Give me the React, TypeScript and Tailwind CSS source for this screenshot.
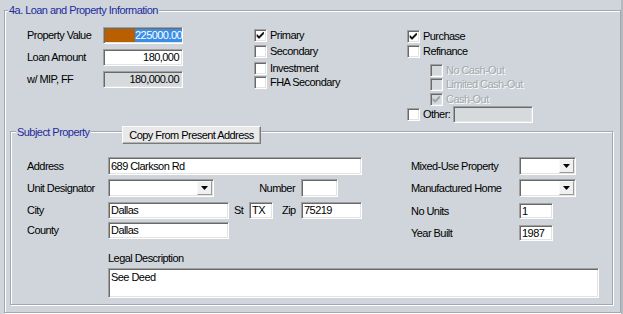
import React from 'react'

// classic 3D sunken edge used by text boxes, combos and check boxes
const sunken =
  'border border-t-[#a0a0a0] border-l-[#a0a0a0] border-b-white border-r-white shadow-[inset_1px_1px_0_#696969,inset_-1px_-1px_0_#e3e3e3]'

const Field: React.FC<{
  w: string
  h?: string
  value?: string
  right?: boolean
  bg?: string
}> = ({ w, h = 'h-[18px]', value = '', right = false, bg = 'bg-white' }) => (
  <div
    className={`${w} ${h} ${bg} ${sunken} flex items-center overflow-hidden whitespace-nowrap ${
      right ? 'justify-end pr-[3px]' : 'pl-[2px]'
    }`}
  >
    {value}
  </div>
)

const Combo: React.FC<{ w: string }> = ({ w }) => (
  <div className={`${w} h-[18px] bg-white ${sunken} flex justify-end p-[1px]`}>
    <div className="w-[15px] h-full bg-[#f0f0f0] border border-t-[#fafafa] border-l-[#fafafa] border-b-[#9a9a9a] border-r-[#9a9a9a] flex items-center justify-center">
      <svg width="7" height="4" viewBox="0 0 7 4">
        <path d="M0 0h7L3.5 4z" fill="#000" />
      </svg>
    </div>
  </div>
)

const Check: React.FC<{
  label: string
  checked?: boolean
  disabled?: boolean
  className?: string
}> = ({ label, checked = false, disabled = false, className = '' }) => (
  <div className={`flex items-center h-[13px] ${className}`}>
    <span
      className={`w-[13px] h-[13px] shrink-0 flex items-center justify-center ${sunken} ${
        disabled ? 'bg-[#d3d8dc]' : 'bg-white'
      }`}
    >
      {checked && (
        <svg width="11" height="11" viewBox="0 0 11 11">
          <path
            d="M2 4.5l2 2 4.5-4.5v2L4 8.5l-2-2z"
            fill={disabled ? '#9a9fa3' : '#000'}
            stroke={disabled ? '#9a9fa3' : '#000'}
            strokeWidth="0.6"
          />
        </svg>
      )}
    </span>
    <span
      className={`ml-[3px] whitespace-nowrap ${
        disabled ? 'text-[#a3a8ac] [text-shadow:1px_1px_0_#fff]' : 'text-black'
      }`}
    >
      {label}
    </span>
  </div>
)

export default function App() {
  return (
    <div className="w-[623px] h-[314px] overflow-hidden bg-[#cfd5da] border-r-2 border-[#b3b9be] text-[11px] leading-[13px] tracking-[-0.55px] text-black [font-family:'Liberation_Sans',Arial,sans-serif]">
      {/* 4a group */}
      <div className="mt-[10px] ml-[4px] w-[617px] h-[303px] border border-[#a2a8ad] shadow-[inset_1px_1px_0_#fff,1px_1px_0_#fff]">
        <div className="-mt-[7px] ml-[3px] px-[1px] w-fit bg-[#cfd5da] text-[#1f2b9e]">
          4a. Loan and Property Information
        </div>

        <div className="mt-[10px] pl-[22px] flex items-start">
          {/* amounts */}
          <div className="w-[227px] flex flex-col">
            <div className="flex items-center h-[17px]">
              <span className="w-[76px]">Property Value</span>
              <div
                className={`w-[80px] h-[17px] bg-[#b95f00] ${sunken} pl-[31px] flex items-center overflow-hidden whitespace-nowrap`}
              >
                <span className="bg-[#3a8ee8] text-white">225000.00</span>
              </div>
            </div>
            <div className="flex items-center h-[17px] mt-[5px]">
              <span className="w-[76px]">Loan Amount</span>
              <Field w="w-[80px]" h="h-[17px]" value="180,000" right />
            </div>
            <div className="flex items-center h-[17px] mt-[5px]">
              <span className="w-[76px]">w/ MIP, FF</span>
              <Field w="w-[80px]" h="h-[17px]" value="180,000.00" right bg="bg-[#d6dadd]" />
            </div>
          </div>

          {/* occupancy */}
          <div className="w-[153px] pt-[2px] flex flex-col">
            <Check label="Primary" checked />
            <Check label="Secondary" className="mt-[3px]" />
            <Check label="Investment" className="mt-[4px]" />
            <Check label="FHA Secondary" className="mt-[1px]" />
          </div>

          {/* purpose */}
          <div className="pt-[3px] flex flex-col">
            <Check label="Purchase" checked />
            <Check label="Refinance" className="mt-[2px]" />
            <Check label="No Cash-Out" disabled className="mt-[6px] ml-[23px]" />
            <Check label="Limited Cash-Out" disabled className="mt-[1px] ml-[23px]" />
            <Check label="Cash-Out" disabled checked className="mt-[2px] ml-[23px]" />
            <div className="flex items-center h-[17px]">
              <span className={`w-[13px] h-[13px] bg-white ${sunken}`} />
              <span className="ml-[3px] w-[30px]">Other:</span>
              <Field w="w-[80px]" h="h-[17px]" bg="bg-[#d6dadd]" />
            </div>
          </div>
        </div>

        {/* Subject Property group */}
        <div className="mt-[8px] ml-[5px] w-[603px] h-[174px] border border-[#a2a8ad] shadow-[inset_1px_1px_0_#fff,1px_1px_0_#fff]">
          <div className="-mt-[6px] flex items-start">
            <div className="w-[111px] pl-[5px]">
              <span className="px-[1px] bg-[#cfd5da] text-[#1f2b9e]">Subject Property</span>
            </div>
            <div className="w-[139px] h-[18px] flex items-center justify-center whitespace-nowrap bg-[#e9e9e9] border border-t-[#fdfdfd] border-l-[#fdfdfd] border-b-[#7a7a7a] border-r-[#7a7a7a] shadow-[inset_-1px_-1px_0_#b5b5b5]">
              Copy From Present Address
            </div>
          </div>

          <div className="mt-[13px] flex items-start">
            <div className="w-[400px] pl-[16px] flex flex-col">
              <div className="flex items-center h-[18px]">
                <span className="w-[81px]">Address</span>
                <Field w="w-[254px]" value="689 Clarkson Rd" />
              </div>
              <div className="flex items-center h-[18px] mt-[4px]">
                <span className="w-[81px]">Unit Designator</span>
                <Combo w="w-[106px]" />
                <span className="w-[87px] text-right pr-[6px]">Number</span>
                <Field w="w-[37px]" />
              </div>
              <div className="flex items-center h-[17px] mt-[5px]">
                <span className="w-[81px]">City</span>
                <Field w="w-[121px]" h="h-[17px]" value="Dallas" />
                <span className="w-[20px] pl-[5px]">St</span>
                <Field w="w-[24px]" h="h-[17px]" value="TX" />
                <span className="w-[28px] pl-[9px]">Zip</span>
                <Field w="w-[61px]" h="h-[17px]" value="75219" />
              </div>
              <div className="flex items-center h-[17px] mt-[3px]">
                <span className="w-[81px]">County</span>
                <Field w="w-[121px]" h="h-[17px]" value="Dallas" />
              </div>
            </div>

            <div className="flex flex-col">
              <div className="flex items-center h-[18px]">
                <span className="w-[108px]">Mixed-Use Property</span>
                <Combo w="w-[57px]" />
              </div>
              <div className="flex items-center h-[18px] mt-[4px]">
                <span className="w-[108px]">Manufactured Home</span>
                <Combo w="w-[57px]" />
              </div>
              <div className="flex items-center h-[16px] mt-[6px]">
                <span className="w-[108px]">No Units</span>
                <Field w="w-[34px]" h="h-[16px]" value="1" />
              </div>
              <div className="flex items-center h-[16px] mt-[6px]">
                <span className="w-[108px]">Year Built</span>
                <Field w="w-[34px]" h="h-[16px]" value="1987" />
              </div>
            </div>
          </div>

          <div className="mt-[11px] ml-[97px]">Legal Description</div>
          <div className={`mt-[3px] ml-[97px] w-[491px] h-[30px] bg-white ${sunken} pl-[2px] pt-[2px]`}>
            See Deed
          </div>
        </div>
      </div>
    </div>
  )
}
